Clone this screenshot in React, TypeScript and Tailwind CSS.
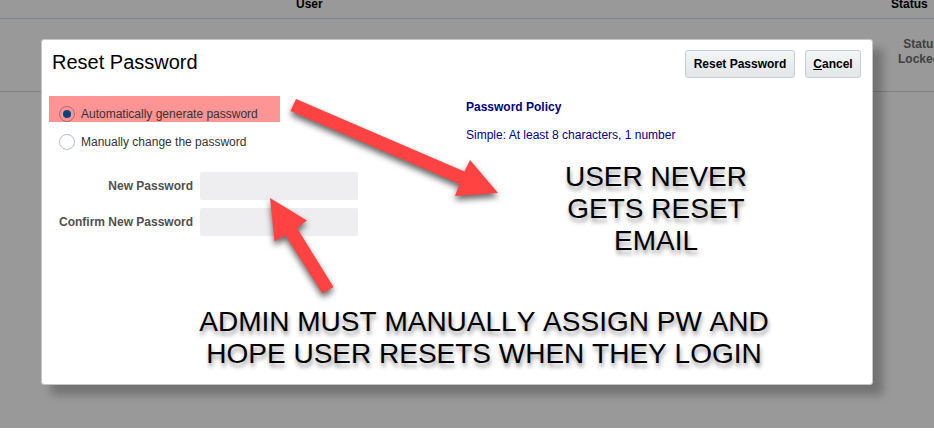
import type { ReactNode } from 'react';

function BackgroundTable() {
  return (
    <table className="w-full table-fixed border-collapse text-xs font-bold [grid-area:1/1] self-start">
      <colgroup>
        <col className="w-[290px]" />
        <col />
        <col className="w-[49px]" />
      </colgroup>
      <thead>
        <tr className="h-[18px] border-b border-[#7c8389] text-black">
          <th />
          <th className="p-0 pl-1.5 text-left align-top">
            <div className="-mt-1 h-4 leading-4">User</div>
          </th>
          <th className="p-0 pl-1.5 text-left align-top">
            <div className="-mt-1 h-4 leading-4">Status</div>
          </th>
        </tr>
      </thead>
      <tbody>
        <tr className="h-[73px] border-b border-[#828282] text-[#3f3f3f]">
          <td />
          <td />
          <td className="p-0 pl-1.5 align-top">
            <div className="mt-[18px] w-[53px] text-right leading-[15px]">
              Status:
              <br />
              Locked:
            </div>
          </td>
        </tr>
      </tbody>
    </table>
  );
}

function ActionButton({ className, children }: { className: string; children: ReactNode }) {
  return (
    <button
      type="button"
      className={`h-7 rounded-[3px] border border-[#c4ced7] bg-linear-to-b from-[#f3f5f6] to-[#e3e7ea] text-xs font-bold text-black ${className}`}
    >
      {children}
    </button>
  );
}

function ModeOption({ id, label, checked }: { id: string; label: string; checked?: boolean }) {
  return (
    <div className="flex h-7 items-center gap-1.5 pl-[17px]">
      <input
        id={id}
        type="radio"
        name="mode"
        defaultChecked={checked}
        className="grid size-4 appearance-none place-items-center rounded-full border border-[#b3bfca] bg-white before:size-2 before:rounded-full checked:border-[#a86c74] checked:bg-[#ff9494] checked:before:bg-[#04447c]"
      />
      <label htmlFor={id} className="text-xs text-[#333333]">
        {label}
      </label>
    </div>
  );
}

function PasswordField({ id, label }: { id: string; label: string }) {
  return (
    <>
      <label htmlFor={id} className="text-right text-xs font-bold text-[#4f4f4f]">
        {label}
      </label>
      <input id={id} type="password" disabled className="h-7 w-full rounded-[2px] bg-[#eeeef0]" />
    </>
  );
}

function Note({ className, children }: { className: string; children: ReactNode }) {
  return (
    <p
      className={`text-center text-[28px] leading-8 text-black [font-kerning:none] [text-shadow:1px_4px_4px_rgba(0,0,0,0.4)] ${className}`}
    >
      {children}
    </p>
  );
}

function Arrows() {
  return (
    <svg
      aria-hidden="true"
      viewBox="260 80 260 220"
      className="pointer-events-none absolute top-10 left-[218px] h-[220px] w-[260px] drop-shadow-[0_4px_3px_rgba(0,0,0,0.6)]"
      fill="#ff4343"
    >
      <path d="M296 99 L464.500 171.500 L470 160 L498 193 L455 196 L459.500 184 L290.500 111 Z" />
      <path d="M270 198 L307 220.500 L297 228 L333.500 287 L322.500 293.500 L285.500 235.500 L274.500 241.500 Z" />
    </svg>
  );
}

export default function App() {
  return (
    <main className="grid overflow-hidden bg-[#999999] font-['Liberation_Sans',Arial,sans-serif]">
      <BackgroundTable />
      <div className="z-10 pt-[39px] pr-[61px] pb-[43px] pl-[41px] [grid-area:1/1]">
        <section
          role="dialog"
          aria-labelledby="dialog-title"
          className="relative rounded-[3px] border border-[#c6c6c6] bg-white pb-3.5 shadow-[10px_10px_8px_rgba(0,0,0,0.25)]"
        >
          <header className="flex items-start gap-2.5 pt-2.5 pr-[11px] pl-2.5">
            <h1 id="dialog-title" className="mr-auto text-xl leading-6 text-black">
              Reset Password
            </h1>
            <ActionButton className="w-[110px]">Reset Password</ActionButton>
            <ActionButton className="w-14">
              <span className="underline">C</span>ancel
            </ActionButton>
          </header>

          <div className="grid grid-cols-[424px_1fr]">
            <form className="pt-[22px]">
              <div className="relative">
                <div className="pointer-events-none absolute -top-1 left-[7px] h-[26px] w-[231px] bg-[#ff9494]" />
                <div className="relative">
                  <ModeOption id="auto" label="Automatically generate password" checked />
                  <ModeOption id="manual" label="Manually change the password" />
                </div>
              </div>
              <div className="grid grid-cols-[151px_158px] items-center gap-x-[7px] gap-y-2 pt-4">
                <PasswordField id="new-password" label="New Password" />
                <PasswordField id="confirm-password" label="Confirm New Password" />
              </div>
            </form>
            <div className="pt-[15px] text-xs leading-7 text-[#000080]">
              <h2 className="font-bold">Password Policy</h2>
              <p>Simple: At least 8 characters, 1 number</p>
              <Note className="pt-3 pr-[26px]">
                USER NEVER
                <br />
                GETS RESET
                <br />
                EMAIL
              </Note>
            </div>
          </div>

          <Note className="pt-[49px] pl-[54px]">
            ADMIN MUST MANUALLY ASSIGN PW AND
            <br />
            HOPE USER RESETS WHEN THEY LOGIN
          </Note>
          <Arrows />
        </section>
      </div>
    </main>
  );
}
